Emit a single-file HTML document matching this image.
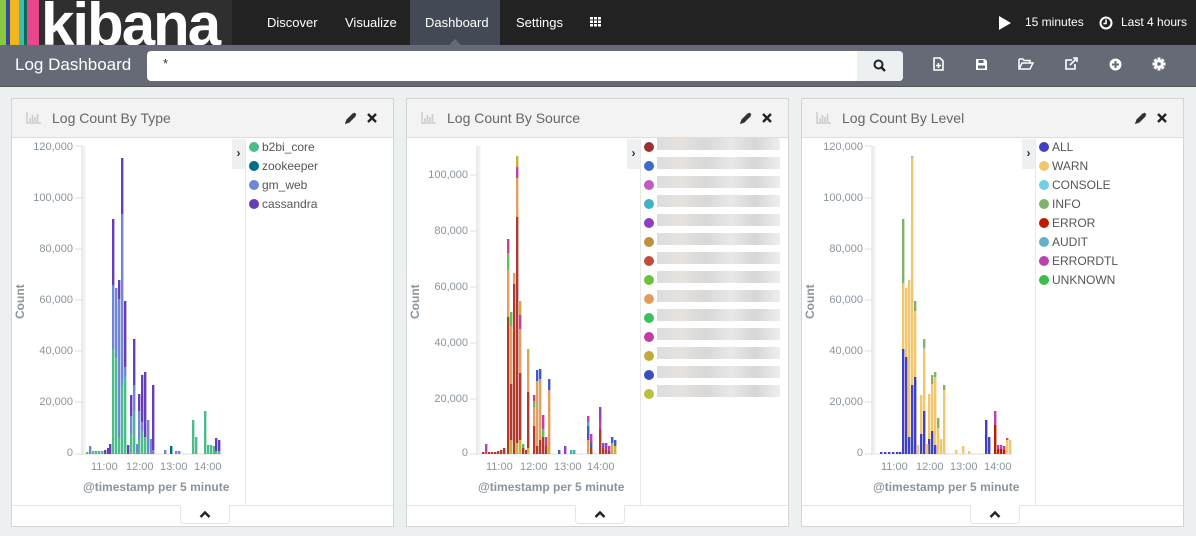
<!DOCTYPE html>
<html><head><meta charset="utf-8"><style>
*{margin:0;padding:0;box-sizing:border-box}
body{width:1196px;height:536px;overflow:hidden;background:#ecf0f1;font-family:"Liberation Sans",Arial,sans-serif;position:relative}
.a{position:absolute}
#top{left:0;top:0;width:1196px;height:45px;background:#222}
.nav{top:0;height:45px;line-height:45px;color:#fff;font-size:13px}
#sub{left:0;top:45px;width:1196px;height:42px;background:#656a76;border-bottom:1px solid #555}
.panel{top:98px;width:383px;height:429px;background:#fff;border:1px solid #d4d4d4}
.ph{position:absolute;left:0;top:0;width:100%;height:39px;background:#f3f3f3;border-bottom:1px solid #ddd}
.pt{position:absolute;left:40px;top:11px;font-size:14px;color:#666}
.yl{position:absolute;font-size:11px;color:#8a949c;text-align:right;width:60px}
.xl{position:absolute;font-size:11px;color:#8a949c}
.cnt{position:absolute;font-size:12px;font-weight:bold;color:#8a949c;transform:rotate(-90deg);transform-origin:left top}
.xt{position:absolute;font-size:12px;font-weight:bold;color:#8a949c;top:381px}
.lg{position:absolute;font-size:12px;color:#555;line-height:19px}
.lg div{position:relative;padding-left:15px;height:19px}
.lg i{position:absolute;left:2px;top:4px;width:10px;height:10px;border-radius:5px}
.bar{position:absolute;height:12px;left:15px;width:123px;background:linear-gradient(90deg,#ddd,#e6e2de 20%,#d8d8d8 40%,#e8e8e8 60%,#d6d6d6 80%,#eee)}
.tog{position:absolute;width:13px;height:30px;top:40px;background:#eef0f2;color:#333;font-size:12px;font-weight:bold;text-align:center;line-height:28px}
.bot{position:absolute;left:0;top:406px;width:100%;height:1px;background:#e4e4e4}
.tab{position:absolute;top:406px;width:50px;height:19px;background:#fff;border:1px solid #e4e4e4;border-top:none;border-radius:0 0 4px 4px;text-align:center}
.vd{position:absolute;top:40px;width:1px;height:366px;background:#e8e8e8}
</style></head><body>
<div id="top" class="a"></div>
<div class="a" style="left:0;top:0;width:232px;height:45px;background:#2f2f2f"></div>
<div class="a" style="left:0;top:0;width:6px;height:45px;background:#8cc63f"></div>
<div class="a" style="left:6px;top:0;width:4px;height:45px;background:#30499b"></div>
<div class="a" style="left:10px;top:0;width:9px;height:45px;background:#f1b61b"></div>
<div class="a" style="left:19px;top:0;width:5px;height:45px;background:#3ebeb0"></div>
<div class="a" style="left:24px;top:0;width:3px;height:45px;background:#0a6b5b"></div>
<div class="a" style="left:27px;top:0;width:12px;height:45px;background:#e8488b"></div>
<div class="a" style="left:0;top:0;width:232px;height:45px;overflow:hidden"><div class="a" style="left:41px;top:-5px;font-size:60px;font-weight:bold;color:#fff;letter-spacing:-2px;line-height:60px">kibana</div></div>
<div class="a" style="left:410px;top:0;width:90px;height:45px;background:#444a55"></div>
<div class="a" style="left:449px;top:39px;width:0;height:0;border-left:6px solid transparent;border-right:6px solid transparent;border-bottom:6px solid #656a76"></div>
<div class="a nav" style="left:267px">Discover</div>
<div class="a nav" style="left:345px">Visualize</div>
<div class="a nav" style="left:425px">Dashboard</div>
<div class="a nav" style="left:516px">Settings</div>
<svg class="a" style="left:590px;top:17px" width="12" height="10"><g fill="#fff"><rect x="0" y="0" width="3" height="2.5"/><rect x="4" y="0" width="3" height="2.5"/><rect x="8" y="0" width="3" height="2.5"/><rect x="0" y="3.5" width="3" height="2.5"/><rect x="4" y="3.5" width="3" height="2.5"/><rect x="8" y="3.5" width="3" height="2.5"/><rect x="0" y="7" width="3" height="2.5"/><rect x="4" y="7" width="3" height="2.5"/><rect x="8" y="7" width="3" height="2.5"/></g></svg>
<svg class="a" style="left:998px;top:15px" width="14" height="16"><path d="M1 1L13 8L1 15Z" fill="#fff"/></svg>
<div class="a nav" style="left:1025px;font-size:12px">15 minutes</div>
<svg class="a" style="left:1099px;top:16px" width="14" height="14"><circle cx="7" cy="7" r="5.5" fill="none" stroke="#fff" stroke-width="2"/><path d="M7 3.5V7.5H4.5" fill="none" stroke="#fff" stroke-width="1.6"/></svg>
<div class="a nav" style="left:1121px;font-size:12px">Last 4 hours</div>

<div id="sub" class="a"></div>
<div class="a" style="left:15px;top:55px;font-size:17px;color:#fff">Log Dashboard</div>
<div class="a" style="left:147px;top:51px;width:756px;height:30px;background:#fff;border-radius:4px"></div>
<div class="a" style="left:857px;top:51px;width:46px;height:30px;background:#ecf0f1;border-radius:0 4px 4px 0"></div>
<div class="a" style="left:163px;top:56px;font-size:13px;color:#333">*</div>
<svg class="a" style="left:873px;top:59px" width="14" height="14"><circle cx="5.5" cy="5.5" r="4" fill="none" stroke="#222" stroke-width="2"/><path d="M8.5 8.5L12 12" stroke="#222" stroke-width="2.4"/></svg>
<svg class="a" style="left:932px;top:57px" width="14" height="14"><path d="M2 1H8L11 4V13H2Z" fill="none" stroke="#fff" stroke-width="1.6"/><path d="M6.5 6V11M4 8.5H9" stroke="#fff" stroke-width="1.6"/></svg>
<svg class="a" style="left:975px;top:58px" width="13" height="13"><path d="M1 1H10L12 3V12H1Z" fill="#fff"/><rect x="3.5" y="2" width="5" height="3" fill="#656a76"/><rect x="3" y="7.5" width="7" height="3" fill="#656a76"/></svg>
<svg class="a" style="left:1018px;top:58px" width="16" height="12"><path d="M1 1H5L6 2.5H12V5M1 1V11H12L15 5H4L1 11" fill="none" stroke="#fff" stroke-width="1.5"/></svg>
<svg class="a" style="left:1064px;top:57px" width="15" height="14"><path d="M8 3H2V12H11V7" fill="none" stroke="#fff" stroke-width="1.6"/><path d="M6 8L13 1M9 1H13V5" fill="none" stroke="#fff" stroke-width="1.6"/></svg>
<svg class="a" style="left:1109px;top:58px" width="13" height="13"><circle cx="6.5" cy="6.5" r="6" fill="#fff"/><path d="M6.5 3V10M3 6.5H10" stroke="#656a76" stroke-width="2"/></svg>
<svg class="a" style="left:1152px;top:57px" width="14" height="14"><g fill="#fff"><circle cx="7" cy="7" r="4.5"/><rect x="5.5" y="0.5" width="3" height="13"/><rect x="0.5" y="5.5" width="13" height="3"/><rect x="5.5" y="0.5" width="3" height="13" transform="rotate(45 7 7)"/><rect x="5.5" y="0.5" width="3" height="13" transform="rotate(-45 7 7)"/></g><circle cx="7" cy="7" r="1.8" fill="#656a76"/></svg>

<!-- Panel 1 -->
<div class="a panel" style="left:11px">
<div class="ph"><svg style="position:absolute;left:14px;top:12px" width="16" height="13"><path d="M1 1V12H15" stroke="#bbb" fill="none"/><path d="M4 11V7M6.5 11V4M9 11V6M11.5 11V3" stroke="#ccc" stroke-width="1.6"/></svg><div class="pt">Log Count By Type</div>
<svg style="position:absolute;left:333px;top:13px" width="12" height="12"><path d="M1 11L2 8L8 2L10 4L4 10Z M9 1L11 3" stroke="#333" stroke-width="1.4" fill="#333"/></svg>
<svg style="position:absolute;left:355px;top:14px" width="10" height="10"><path d="M1 1L9 9M9 1L1 9" stroke="#222" stroke-width="2.4"/></svg></div>
<div class="yl" style="left:1px;top:42px">120,000</div><div class="yl" style="left:1px;top:93px">100,000</div><div class="yl" style="left:1px;top:144px">80,000</div><div class="yl" style="left:1px;top:195px">60,000</div><div class="yl" style="left:1px;top:246px">40,000</div><div class="yl" style="left:1px;top:297px">20,000</div><div class="yl" style="left:1px;top:348px">0</div>
<div class="cnt" style="left:1px;top:220px">Count</div>
<div class="xl" style="left:79px;top:362px">11:00</div><div class="xl" style="left:114px;top:362px">12:00</div><div class="xl" style="left:148px;top:362px">13:00</div><div class="xl" style="left:182px;top:362px">14:00</div>
<div class="xt" style="left:71px">@timestamp per 5 minute</div>
<div class="tog" style="left:220px">›</div><div class="vd" style="left:233px"></div>
<div class="lg" style="left:235px;top:39px"><div><i style="background:#4cbd8a"></i>b2bi_core</div><div><i style="background:#006e8a"></i>zookeeper</div><div><i style="background:#7087d8"></i>gm_web</div><div><i style="background:#663db8"></i>cassandra</div></div>
<div class="bot"></div><div class="tab" style="left:168px"><svg width="12" height="10" style="margin-top:4px"><path d="M1.5 8L6 3.5L10.5 8" stroke="#222" stroke-width="2.4" fill="none"/></svg></div>
</div>

<!-- Panel 2 -->
<div class="a panel" style="left:406px">
<div class="ph"><svg style="position:absolute;left:14px;top:12px" width="16" height="13"><path d="M1 1V12H15" stroke="#bbb" fill="none"/><path d="M4 11V7M6.5 11V4M9 11V6M11.5 11V3" stroke="#ccc" stroke-width="1.6"/></svg><div class="pt">Log Count By Source</div>
<svg style="position:absolute;left:333px;top:13px" width="12" height="12"><path d="M1 11L2 8L8 2L10 4L4 10Z M9 1L11 3" stroke="#333" stroke-width="1.4" fill="#333"/></svg>
<svg style="position:absolute;left:355px;top:14px" width="10" height="10"><path d="M1 1L9 9M9 1L1 9" stroke="#222" stroke-width="2.4"/></svg></div>
<div class="yl" style="left:1px;top:70px">100,000</div><div class="yl" style="left:1px;top:126px">80,000</div><div class="yl" style="left:1px;top:182px">60,000</div><div class="yl" style="left:1px;top:238px">40,000</div><div class="yl" style="left:1px;top:294px">20,000</div><div class="yl" style="left:1px;top:348px">0</div>
<div class="cnt" style="left:1px;top:220px">Count</div>
<div class="xl" style="left:79px;top:362px">11:00</div><div class="xl" style="left:113px;top:362px">12:00</div><div class="xl" style="left:147px;top:362px">13:00</div><div class="xl" style="left:180px;top:362px">14:00</div>
<div class="xt" style="left:71px">@timestamp per 5 minute</div>
<div class="tog" style="left:220px">›</div><div class="vd" style="left:233px"></div>
<div class="lg" style="left:235px;top:39px">
<div><i style="background:#9e3030"></i><span class="bar"></span></div><div><i style="background:#3f6bc4"></i><span class="bar"></span></div><div><i style="background:#c15ac1"></i><span class="bar"></span></div><div><i style="background:#3fb3c4"></i><span class="bar"></span></div><div><i style="background:#8e3ec1"></i><span class="bar"></span></div><div><i style="background:#c1903c"></i><span class="bar"></span></div><div><i style="background:#c14c3c"></i><span class="bar"></span></div><div><i style="background:#6cc13c"></i><span class="bar"></span></div><div><i style="background:#e09c5c"></i><span class="bar"></span></div><div><i style="background:#3cc15c"></i><span class="bar"></span></div><div><i style="background:#c13ca5"></i><span class="bar"></span></div><div><i style="background:#c1aa3c"></i><span class="bar"></span></div><div><i style="background:#3c4cc1"></i><span class="bar"></span></div><div><i style="background:#b9c13c"></i><span class="bar"></span></div></div>
<div class="bot"></div><div class="tab" style="left:168px"><svg width="12" height="10" style="margin-top:4px"><path d="M1.5 8L6 3.5L10.5 8" stroke="#222" stroke-width="2.4" fill="none"/></svg></div>
</div>

<!-- Panel 3 -->
<div class="a panel" style="left:801px">
<div class="ph"><svg style="position:absolute;left:14px;top:12px" width="16" height="13"><path d="M1 1V12H15" stroke="#bbb" fill="none"/><path d="M4 11V7M6.5 11V4M9 11V6M11.5 11V3" stroke="#ccc" stroke-width="1.6"/></svg><div class="pt">Log Count By Level</div>
<svg style="position:absolute;left:333px;top:13px" width="12" height="12"><path d="M1 11L2 8L8 2L10 4L4 10Z M9 1L11 3" stroke="#333" stroke-width="1.4" fill="#333"/></svg>
<svg style="position:absolute;left:355px;top:14px" width="10" height="10"><path d="M1 1L9 9M9 1L1 9" stroke="#222" stroke-width="2.4"/></svg></div>
<div class="yl" style="left:1px;top:42px">120,000</div><div class="yl" style="left:1px;top:93px">100,000</div><div class="yl" style="left:1px;top:144px">80,000</div><div class="yl" style="left:1px;top:195px">60,000</div><div class="yl" style="left:1px;top:246px">40,000</div><div class="yl" style="left:1px;top:297px">20,000</div><div class="yl" style="left:1px;top:348px">0</div>
<div class="cnt" style="left:1px;top:220px">Count</div>
<div class="xl" style="left:79px;top:362px">11:00</div><div class="xl" style="left:114px;top:362px">12:00</div><div class="xl" style="left:148px;top:362px">13:00</div><div class="xl" style="left:182px;top:362px">14:00</div>
<div class="xt" style="left:71px">@timestamp per 5 minute</div>
<div class="tog" style="left:220px">›</div><div class="vd" style="left:233px"></div>
<div class="lg" style="left:235px;top:39px"><div><i style="background:#4040c0"></i>ALL</div><div><i style="background:#f2c66d"></i>WARN</div><div><i style="background:#6ed0e0"></i>CONSOLE</div><div><i style="background:#7eb26d"></i>INFO</div><div><i style="background:#bf1b00"></i>ERROR</div><div><i style="background:#64b0c8"></i>AUDIT</div><div><i style="background:#ba43a9"></i>ERRORDTL</div><div><i style="background:#3cbd4c"></i>UNKNOWN</div></div>
<div class="bot"></div><div class="tab" style="left:168px"><svg width="12" height="10" style="margin-top:4px"><path d="M1.5 8L6 3.5L10.5 8" stroke="#222" stroke-width="2.4" fill="none"/></svg></div>
</div>

<svg class="a" style="left:0;top:0" width="1196" height="536">
<g stroke="#ddd" stroke-width="1"><path d="M82 146V455M75 146H82M75 198H82M75 249H82M75 300H82M75 351H82M75 402H82M75 454H82M82 454H222"/>
<path d="M477 146V455M470 175H477M470 231H477M470 287H477M470 343H477M470 399H477M470 454H477M477 454H617"/>
<path d="M872 146V455M865 146H872M865 198H872M865 249H872M865 300H872M865 351H872M865 402H872M865 454H872M872 454H1012"/></g>
<path d="M84 146V454M479 146V454M874 146V454" stroke="#f2f2f2" stroke-width="3"/>
<g>
<g fill="#4cbd8a"><rect x="86" y="452" width="2.4" height="2"/><rect x="92" y="451" width="2.4" height="3"/><rect x="95" y="451" width="2.4" height="3"/><rect x="98" y="451" width="2.4" height="3"/><rect x="101" y="451" width="2.4" height="3"/>
<rect x="112" y="349" width="2.4" height="105"/><rect x="115" y="357" width="2.4" height="97"/><rect x="118" y="437" width="2.4" height="17"/><rect x="121" y="385" width="2.4" height="69"/><rect x="124" y="377" width="2.4" height="77"/><rect x="130" y="434" width="2.4" height="20"/><rect x="133" y="411" width="2.4" height="43"/><rect x="138" y="439" width="2.4" height="15"/><rect x="141" y="431" width="2.4" height="23"/><rect x="144" y="437" width="2.4" height="17"/>
<rect x="192" y="420" width="2.4" height="34"/><rect x="195" y="437" width="2.4" height="17"/><rect x="204" y="411" width="2.4" height="43"/><rect x="207" y="445" width="2.4" height="9"/><rect x="210" y="445" width="2.4" height="9"/><rect x="213" y="446" width="2.4" height="8"/><rect x="215" y="451" width="2.4" height="3"/><rect x="218" y="451" width="2.4" height="3"/></g>
<g fill="#7087d8"><rect x="89" y="446" width="2.4" height="8"/><rect x="112" y="285" width="2.4" height="64"/><rect x="115" y="288" width="2.4" height="69"/><rect x="118" y="299" width="2.4" height="138"/><rect x="121" y="214" width="2.4" height="171"/><rect x="124" y="367" width="2.4" height="10"/><rect x="130" y="416" width="2.4" height="18"/><rect x="133" y="385" width="2.4" height="26"/><rect x="136" y="444" width="2.4" height="10"/><rect x="138" y="411" width="2.4" height="28"/><rect x="141" y="422" width="2.4" height="9"/><rect x="147" y="420" width="2.4" height="34"/><rect x="150" y="439" width="2.4" height="15"/><rect x="152" y="450" width="2.4" height="4"/><rect x="164" y="450" width="2.4" height="4"/><rect x="175" y="451" width="2.4" height="3"/><rect x="178" y="451" width="2.4" height="3"/></g>
<rect x="170" y="446" width="2.4" height="8" fill="#006e8a"/>
<g fill="#663db8"><rect x="104" y="450" width="2.4" height="4"/><rect x="107" y="448" width="2.4" height="6"/><rect x="109" y="444" width="2.4" height="10"/><rect x="112" y="219" width="2.4" height="66"/><rect x="118" y="280" width="2.4" height="19"/><rect x="121" y="158" width="2.4" height="56"/><rect x="124" y="301" width="2.4" height="66"/><rect x="127" y="445" width="2.4" height="9"/><rect x="130" y="395" width="2.4" height="21"/><rect x="133" y="339" width="2.4" height="46"/><rect x="138" y="394" width="2.4" height="17"/><rect x="141" y="375" width="2.4" height="47"/><rect x="144" y="372" width="2.4" height="65"/><rect x="152" y="385" width="2.4" height="65"/><rect x="215" y="438" width="2.4" height="13"/><rect x="218" y="440" width="2.4" height="11"/></g>
<g fill="#4040c0"><rect x="880" y="452" width="2.4" height="2"/><rect x="884" y="452" width="2.4" height="2"/><rect x="888" y="452" width="2.4" height="2"/><rect x="892" y="452" width="2.4" height="2"/><rect x="896" y="452" width="2.4" height="2"/><rect x="899" y="452" width="2.4" height="2"/>
<rect x="902" y="349" width="2.4" height="105"/><rect x="905" y="357" width="2.4" height="97"/><rect x="908" y="437" width="2.4" height="17"/><rect x="911" y="385" width="2.4" height="69"/><rect x="914" y="377" width="2.4" height="77"/><rect x="920" y="434" width="2.4" height="20"/><rect x="923" y="411" width="2.4" height="43"/><rect x="928" y="439" width="2.4" height="15"/><rect x="931" y="431" width="2.4" height="23"/><rect x="934" y="445" width="2.4" height="9"/><rect x="985" y="420" width="2.4" height="34"/><rect x="988" y="437" width="2.4" height="17"/></g>
<g fill="#f2c66d"><rect x="902" y="283" width="2.4" height="66"/><rect x="905" y="288" width="2.4" height="69"/><rect x="908" y="280" width="2.4" height="157"/><rect x="911" y="158" width="2.4" height="227"/><rect x="914" y="311" width="2.4" height="66"/><rect x="917" y="445" width="2.4" height="9"/><rect x="920" y="395" width="2.4" height="39"/><rect x="923" y="349" width="2.4" height="62"/><rect x="926" y="444" width="2.4" height="10"/><rect x="928" y="394" width="2.4" height="45"/><rect x="931" y="384" width="2.4" height="47"/><rect x="934" y="377" width="2.4" height="68"/><rect x="937" y="428" width="2.4" height="26"/><rect x="940" y="439" width="2.4" height="15"/><rect x="943" y="390" width="2.4" height="64"/><rect x="955" y="450" width="2.4" height="4"/><rect x="962" y="446" width="2.4" height="8"/><rect x="968" y="451" width="2.4" height="3"/><rect x="1006" y="440" width="2.4" height="14"/><rect x="1009" y="440" width="2.4" height="14"/></g>
<g fill="#7eb26d"><rect x="902" y="219" width="2.4" height="64"/><rect x="914" y="301" width="2.4" height="10"/><rect x="923" y="339" width="2.4" height="8"/><rect x="931" y="375" width="2.4" height="9"/><rect x="934" y="372" width="2.4" height="5"/><rect x="937" y="418" width="2.4" height="10"/><rect x="943" y="385" width="2.4" height="5"/></g>
<g fill="#6ed0e0"><rect x="911" y="156" width="2.4" height="2"/><rect x="923" y="347" width="2.4" height="2"/></g>
<g fill="#bf1b00"><rect x="994" y="425" width="2.4" height="29"/><rect x="997" y="449" width="2.4" height="5"/><rect x="1000" y="449" width="2.4" height="5"/><rect x="1003" y="450" width="2.4" height="4"/></g>
<g fill="#ba43a9"><rect x="994" y="411" width="2.4" height="14"/><rect x="997" y="445" width="2.4" height="4"/><rect x="1000" y="445" width="2.4" height="4"/><rect x="1003" y="446" width="2.4" height="4"/><rect x="1006" y="438" width="2.4" height="2"/></g>
<g fill="#b03a2e"><rect x="482" y="452" width="2.4" height="2"/><rect x="488" y="452" width="2.4" height="2"/><rect x="491" y="452" width="2.4" height="2"/><rect x="494" y="452" width="2.4" height="2"/><rect x="497" y="451" width="2.4" height="3"/><rect x="500" y="450" width="2.4" height="4"/><rect x="503" y="448" width="2.4" height="6"/>
<rect x="507" y="317" width="2.4" height="137"/><rect x="510" y="384" width="2.4" height="56"/><rect x="513" y="284" width="2.4" height="170"/><rect x="516" y="217" width="2.4" height="226"/><rect x="519" y="373" width="2.4" height="67"/><rect x="522" y="448" width="2.4" height="6"/><rect x="525" y="450" width="2.4" height="4"/><rect x="527" y="392" width="2.4" height="56"/><rect x="533" y="426" width="2.4" height="28"/><rect x="536" y="446" width="2.4" height="8"/><rect x="539" y="440" width="2.4" height="14"/><rect x="542" y="437" width="2.4" height="17"/><rect x="545" y="446" width="2.4" height="8"/><rect x="590" y="448" width="2.4" height="6"/><rect x="599" y="429" width="2.4" height="25"/><rect x="602" y="448" width="2.4" height="6"/><rect x="605" y="450" width="2.4" height="4"/><rect x="608" y="451" width="2.4" height="3"/></g>
<g fill="#e0a060"><rect x="507" y="270" width="2.4" height="47"/><rect x="510" y="326" width="2.4" height="58"/><rect x="513" y="273" width="2.4" height="11"/><rect x="516" y="178" width="2.4" height="39"/><rect x="519" y="329" width="2.4" height="44"/><rect x="527" y="356" width="2.4" height="36"/><rect x="533" y="407" width="2.4" height="19"/><rect x="536" y="381" width="2.4" height="65"/><rect x="539" y="379" width="2.4" height="61"/><rect x="548" y="390" width="2.4" height="58"/></g>
<g fill="#c8b040"><rect x="510" y="440" width="2.4" height="14"/><rect x="516" y="443" width="2.4" height="11"/><rect x="516" y="156" width="2.4" height="11"/><rect x="519" y="440" width="2.4" height="14"/><rect x="519" y="301" width="2.4" height="14"/><rect x="527" y="448" width="2.4" height="6"/><rect x="527" y="349" width="2.4" height="7"/><rect x="548" y="448" width="2.4" height="6"/><rect x="587" y="440" width="2.4" height="14"/><rect x="611" y="443" width="2.4" height="11"/><rect x="614" y="446" width="2.4" height="8"/></g>
<g fill="#5cc35c"><rect x="507" y="253" width="2.4" height="17"/><rect x="510" y="312" width="2.4" height="14"/><rect x="522" y="444" width="2.4" height="4"/><rect x="533" y="401" width="2.4" height="6"/><rect x="542" y="429" width="2.4" height="8"/></g>
<g fill="#c040a8"><rect x="485" y="444" width="2.4" height="10"/><rect x="507" y="239" width="2.4" height="14"/><rect x="516" y="167" width="2.4" height="11"/><rect x="519" y="315" width="2.4" height="14"/><rect x="533" y="395" width="2.4" height="6"/><rect x="542" y="415" width="2.4" height="14"/><rect x="545" y="437" width="2.4" height="9"/><rect x="587" y="416" width="2.4" height="6"/><rect x="590" y="434" width="2.4" height="9"/><rect x="599" y="421" width="2.4" height="8"/><rect x="608" y="446" width="2.4" height="5"/></g>
<g fill="#3f5fc0"><rect x="536" y="370" width="2.4" height="11"/><rect x="539" y="369" width="2.4" height="10"/><rect x="548" y="379" width="2.4" height="11"/><rect x="558" y="450" width="2.4" height="4"/><rect x="587" y="426" width="2.4" height="14"/><rect x="590" y="443" width="2.4" height="5"/><rect x="611" y="437" width="2.4" height="6"/><rect x="614" y="440" width="2.4" height="6"/></g>
<g fill="#40b0c0"><rect x="570" y="450" width="2.4" height="4"/><rect x="573" y="450" width="2.4" height="4"/><rect x="587" y="422" width="2.4" height="4"/></g>
<g fill="#9040c0"><rect x="564" y="446" width="2.4" height="8"/><rect x="599" y="407" width="2.4" height="14"/><rect x="602" y="443" width="2.4" height="5"/><rect x="605" y="443" width="2.4" height="7"/></g>
</g>
</svg>
</body></html>
